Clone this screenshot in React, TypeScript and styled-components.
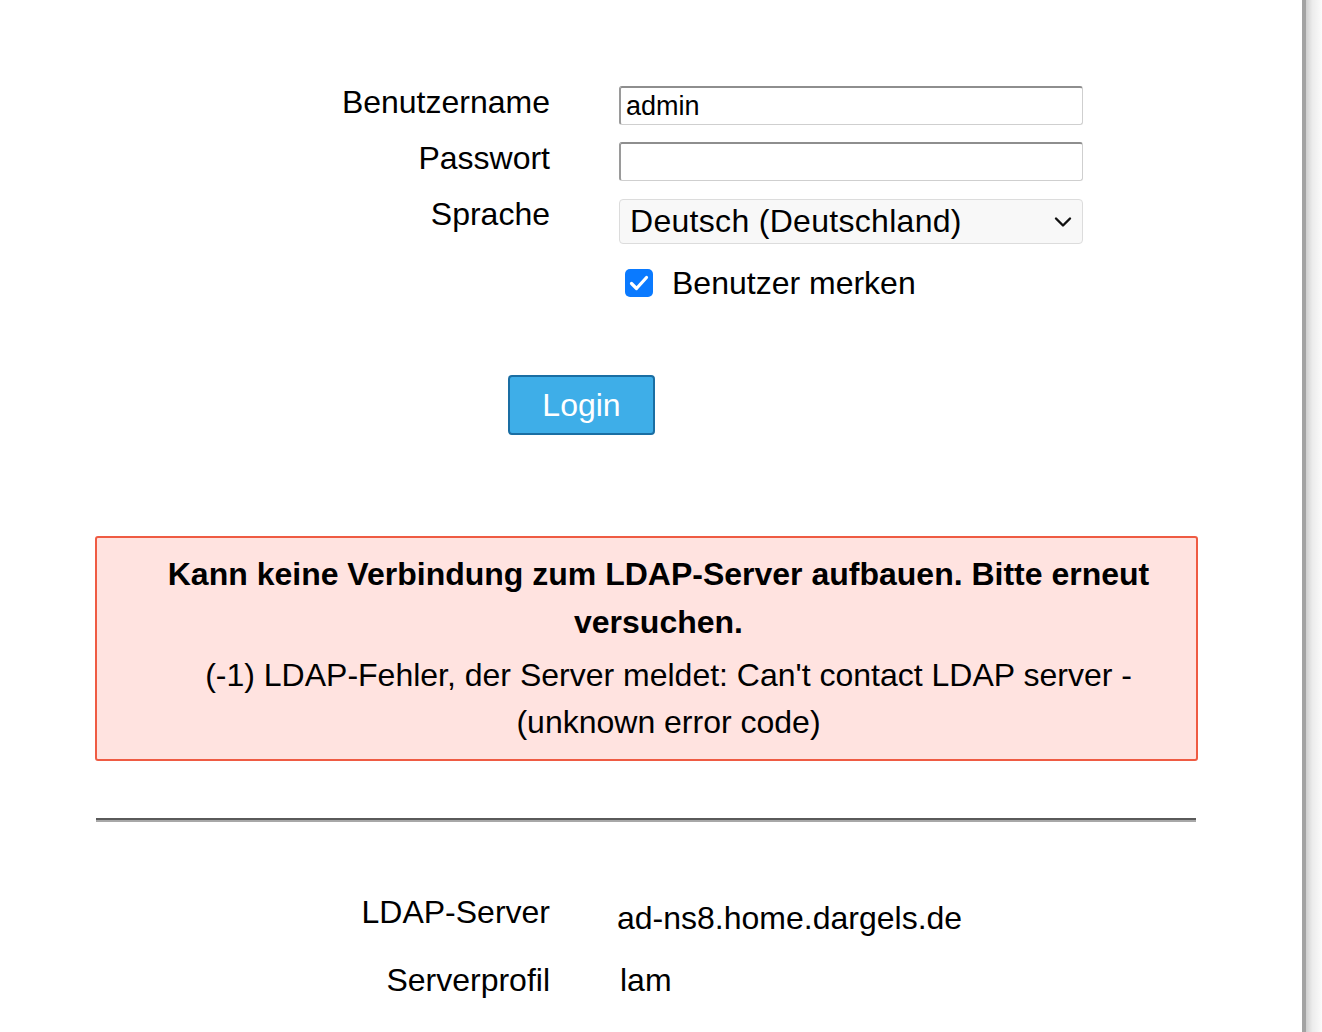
import React, { useState } from 'react';
import styled, { createGlobalStyle } from 'styled-components';

const GlobalStyle = createGlobalStyle`
    html, body {
        margin: 0;
        padding: 0;
        background: #ffffff;
        font-family: "Liberation Sans", Arial, Helvetica, sans-serif;
        color: #000000;
    }
`;

const Page = styled.div`
    display: flex;
    flex-direction: row;
    width: 1322px;
    height: 1032px;
    overflow: hidden;
`;

const Main = styled.div`
    display: flex;
    flex-direction: column;
    width: 1302px;
    flex-shrink: 0;
    padding-top: 86px;
    box-sizing: border-box;
`;

const Edge = styled.div`
    width: 4px;
    flex-shrink: 0;
    background: #a3a3a3;
`;

const Shadow = styled.div`
    flex: 1;
    background: linear-gradient(to right, #cfcfcf 0%, #ececec 40%, #fbfbfb 100%);
`;

const FormGrid = styled.div`
    display: grid;
    grid-template-columns: 550px 464px;
    column-gap: 69px;
    row-gap: 17px;
    align-items: start;
`;

const Label = styled.div`
    text-align: right;
    font-size: 32px;
    line-height: 32px;
    white-space: nowrap;
`;

const TextInput = styled.input`
    box-sizing: border-box;
    width: 464px;
    height: 39px;
    margin: 0;
    padding: 0 5px;
    font-family: "Liberation Sans", Arial, sans-serif;
    font-size: 27px;
    color: #000;
    background: #fff;
    border: 1px solid #cfcfcf;
    border-top: 2px solid #8e8e8e;
    border-left: 2px solid #9a9a9a;
    border-radius: 3px;
    outline: none;
`;

const SelectBox = styled.div`
    box-sizing: border-box;
    display: flex;
    align-items: center;
    justify-content: space-between;
    width: 464px;
    height: 45px;
    margin-top: 1px;
    padding: 0 10px 0 10px;
    font-size: 32px;
    letter-spacing: 0.3px;
    background: #f8f8f8;
    border: 1px solid #dcdcdc;
    border-radius: 4px;
`;

const CheckRow = styled.label`
    display: flex;
    align-items: center;
    gap: 19px;
    margin-top: 6px;
    padding-left: 6px;
    font-size: 32px;
    line-height: 32px;
`;

const CheckBox = styled.span<{ checked: boolean }>`
    display: flex;
    align-items: center;
    justify-content: center;
    width: 28px;
    height: 28px;
    border-radius: 5px;
    background: ${(p) => (p.checked ? '#0a7aff' : '#ffffff')};
    border: ${(p) => (p.checked ? 'none' : '1px solid #999')};
`;

const LoginButton = styled.button`
    box-sizing: border-box;
    align-self: flex-start;
    margin: 76px 0 0 508px;
    width: 147px;
    height: 60px;
    padding: 0;
    font-family: "Liberation Sans", Arial, sans-serif;
    font-size: 32px;
    color: #ffffff;
    background: #3eaee8;
    border: 2px solid #1a6ea3;
    border-radius: 4px;
    cursor: pointer;
`;

const ErrorBox = styled.div`
    box-sizing: border-box;
    margin: 101px 0 0 95px;
    width: 1103px;
    padding: 12px 10px 13px 34px;
    background: #ffe3e0;
    border: 2px solid #ef5b43;
    border-radius: 3px;
    text-align: center;
`;

const ErrorTitle = styled.div`
    font-size: 32px;
    line-height: 48px;
    font-weight: bold;
`;

const ErrorText = styled.div`
    margin-top: 6px;
    padding-left: 20px;
    font-size: 32px;
    line-height: 47px;
`;

const Rule = styled.hr`
    box-sizing: border-box;
    margin: 57px 0 0 96px;
    width: 1100px;
    height: 0;
    border: none;
    border-top: 2px solid #5a5a5a;
    border-bottom: 2px solid #a8a8a8;
`;

const InfoGrid = styled.div`
    display: grid;
    grid-template-columns: 550px auto;
    column-gap: 67px;
    row-gap: 30px;
    margin-top: 74px;
`;

const InfoValue = styled.div<{ shift?: number }>`
    font-size: 32px;
    line-height: 32px;
    padding-top: ${(p) => p.shift || 0}px;
    padding-left: ${(p) => (p.shift ? 0 : 3)}px;
    white-space: nowrap;
`;

const Chevron = () => (
    <svg width="18" height="12" viewBox="0 0 18 12" fill="none">
        <path d="M2 2.5 L9 9.5 L16 2.5" stroke="#111" strokeWidth="2.4" strokeLinecap="round" strokeLinejoin="round" />
    </svg>
);

const Check = () => (
    <svg width="20" height="16" viewBox="0 0 20 16" fill="none">
        <path d="M2.5 8.5 L7.5 13.5 L17.5 2.5" stroke="#fff" strokeWidth="3.2" strokeLinecap="round" strokeLinejoin="round" />
    </svg>
);

const App = () => {
    const [user, setUser] = useState('admin');
    const [remember, setRemember] = useState(true);

    return (
        <Page>
            <GlobalStyle />
            <Main>
                <FormGrid>
                    <Label>Benutzername</Label>
                    <TextInput value={user} onChange={(e) => setUser(e.currentTarget.value)} />

                    <Label>Passwort</Label>
                    <TextInput type="password" />

                    <Label>Sprache</Label>
                    <SelectBox>
                        <span>Deutsch (Deutschland)</span>
                        <Chevron />
                    </SelectBox>

                    <div />
                    <CheckRow onClick={() => setRemember(!remember)}>
                        <CheckBox checked={remember}>{remember && <Check />}</CheckBox>
                        <span>Benutzer merken</span>
                    </CheckRow>
                </FormGrid>

                <LoginButton>Login</LoginButton>

                <ErrorBox>
                    <ErrorTitle>Kann keine Verbindung zum LDAP-Server aufbauen. Bitte erneut versuchen.</ErrorTitle>
                    <ErrorText>(-1) LDAP-Fehler, der Server meldet: Can't contact LDAP server - (unknown error code)</ErrorText>
                </ErrorBox>

                <Rule />

                <InfoGrid>
                    <Label>LDAP-Server</Label>
                    <InfoValue shift={6}>ad-ns8.home.dargels.de</InfoValue>

                    <Label>Serverprofil</Label>
                    <InfoValue>lam</InfoValue>
                </InfoGrid>
            </Main>
            <Edge />
            <Shadow />
        </Page>
    );
};

export default App;
